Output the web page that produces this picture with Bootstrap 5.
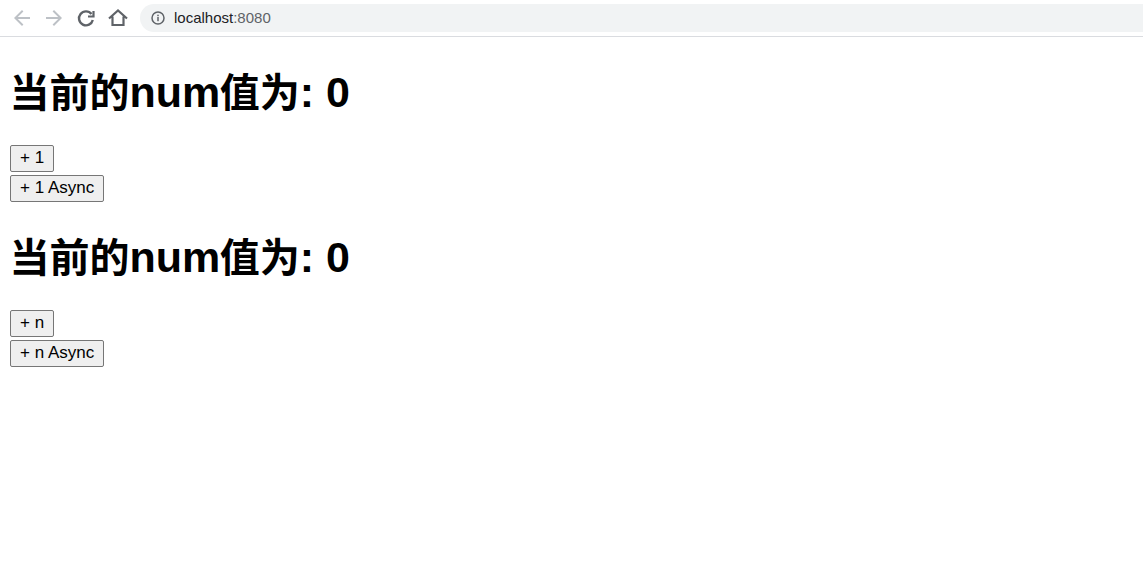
<!DOCTYPE html>
<html lang="zh">

<head>
    <meta charset="UTF-8">
    <title>localhost:8080</title>
    <link rel="stylesheet" href="https://cdn.jsdelivr.net/npm/bootstrap@5.3.3/dist/css/bootstrap.min.css">
    <style>
        body { background: #fff; font-family: "Liberation Sans", "Noto Sans CJK SC", sans-serif; color: #000; }
        .chrome-bar { height: 37px; border-bottom: 1px solid #dadce0; padding-left: 10px; }
        .tool-icon { width: 24px; height: 24px; margin-right: 8px; flex: none; }
        .addr-box { height: 28px; background: #f1f3f4; border-radius: 14px 0 0 14px; margin-left: 2px; padding-left: 10px; font-size: 15px; color: #5f6368; }
        .addr-box b { font-weight: 400; color: #202124; }
        .demo-wrap { padding: 0 10px; }
        .demo-title { font-size: 43px; font-weight: 700; line-height: 47px; height: 48px; margin: 32px 0 28px; }
        .demo-title i { font-size: 40px; font-style: normal; margin-left: -.5px; }
        .demo-btn { display: block; font-size: 17px; line-height: 18px; height: 27px; padding: 2px 9px 4px; margin-bottom: 3px; background: #efefef; border: 1px solid #767676; border-radius: 2px; color: #000; }
    </style>
</head>

<body>
    <div class="chrome-bar d-flex align-items-center">
        <svg class="tool-icon" viewBox="0 0 24 24" fill="#bdc1c6"><path d="M20 11H7.8l5.6-5.6L12 4l-8 8 8 8 1.400-1.400L7.800 13H20z"/></svg>
        <svg class="tool-icon" viewBox="0 0 24 24" fill="#bdc1c6"><path d="M4 11h12.200l-5.600-5.600L12 4l8 8-8 8-1.400-1.400 5.600-5.600H4z"/></svg>
        <svg class="tool-icon" viewBox="0 0 24 24" fill="none" stroke="#5f6368" stroke-width="2.400"><path d="M17.500 8A7 7 0 1 0 18.800 14"/><path d="M19.500 5v5.500H14" stroke-width="2.200"/></svg>
        <svg class="tool-icon" viewBox="0 0 24 24" fill="none" stroke="#5f6368" stroke-width="2.200"><path d="M3 12.500 12 4.500l9 8M6.500 10.500V19h11V10.500"/></svg>
        <div class="addr-box flex-grow-1 d-flex align-items-center">
            <svg width="16" height="16" viewBox="0 0 16 16" class="me-2"><circle cx="8" cy="8" r="6" fill="none" stroke="#5f6368" stroke-width="1.500"/><rect x="7.250" y="7" width="1.500" height="4.200" fill="#5f6368"/><rect x="7.250" y="4.700" width="1.500" height="1.500" fill="#5f6368"/></svg>
            <span><b>localhost</b>:8080</span>
        </div>
    </div>

    <div class="demo-wrap">
        <h1 class="demo-title"><i>当前的</i>num<i>值为</i>: 0</h1>
        <button class="demo-btn">+ 1</button>
        <button class="demo-btn">+ 1 Async</button>
        <h1 class="demo-title"><i>当前的</i>num<i>值为</i>: 0</h1>
        <button class="demo-btn">+ n</button>
        <button class="demo-btn">+ n Async</button>
    </div>

    <script src="https://cdn.jsdelivr.net/npm/bootstrap@5.3.3/dist/js/bootstrap.bundle.min.js"></script>
</body>

</html>
